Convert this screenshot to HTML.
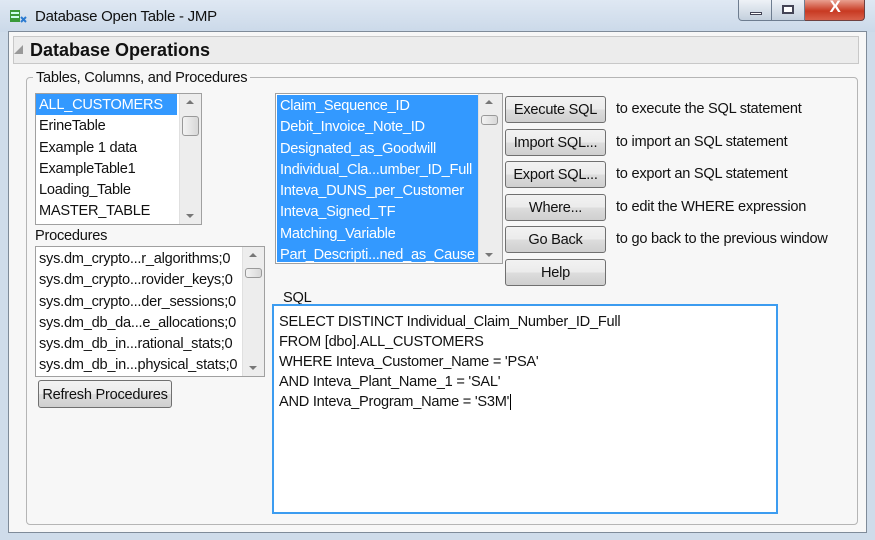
<!DOCTYPE html>
<html><head><style>
*{margin:0;padding:0;box-sizing:border-box}
body{width:875px;height:540px;overflow:hidden;background:#cfdcea;font-family:"Liberation Sans",sans-serif;font-size:14.6px;color:#111;position:relative;letter-spacing:-0.25px}
.a{position:absolute}
.title{left:0;top:0;width:875px;height:32px;background:linear-gradient(#dfe8f3,#cbd9e9)}
.client{left:8px;top:31px;width:859px;height:502px;background:#f7f7f7;border:1px solid #7f8b99}
.list{background:#fff;border:1px solid #a0a0a0;overflow:hidden}
.row{height:21.3px;line-height:23px;padding-left:3px;white-space:nowrap;overflow:hidden}
.sel{background:#3399ff;color:#fff}
.sb{position:absolute;top:0;right:0;width:22px;bottom:0;background:#ededed;border-left:1px solid #e0e0e0}
.thumb{position:absolute;left:2px;width:17px;background:linear-gradient(90deg,#f3f3f3,#d8d8d8);border:1px solid #999;border-radius:3px}
.up,.dn{position:absolute;left:6px;width:0;height:0;border-left:4px solid transparent;border-right:4px solid transparent}
.up{top:6px;border-bottom:4px solid #777}
.dn{bottom:6px;border-top:4px solid #777}
.btn{position:absolute;border:1px solid #707070;border-radius:3px;background:linear-gradient(#f2f2f2 0%,#ebebeb 50%,#dddddd 51%,#cfcfcf 100%);text-align:center;line-height:26px}
.desc{position:absolute;left:616px}
</style></head><body>
<div class="a title"></div>
<svg class="a" style="left:9px;top:8px" width="18" height="18" viewBox="0 0 18 18"><rect x="1" y="2" width="10" height="12" fill="#3a9a3a"/><rect x="2" y="4" width="8" height="2" fill="#cfe"/><rect x="2" y="8" width="8" height="2" fill="#cfe"/><path d="M12 9l5 5M17 9l-5 5" stroke="#2a7ad0" stroke-width="2"/></svg>
<div class="a" style="left:35px;top:8px;font-size:15px">Database Open Table - JMP</div>
<div class="a" style="left:738px;top:0;width:34px;height:21px;border:1px solid #6e7d90;border-top:none;border-radius:0 0 0 4px;background:linear-gradient(#eef2f7,#c4d0dd)"><div class="a" style="left:11px;top:12px;width:12px;height:3px;background:#fff;border:1px solid #445"></div></div>
<div class="a" style="left:772px;top:0;width:33px;height:21px;border:1px solid #6e7d90;border-top:none;border-left:none;background:linear-gradient(#eef2f7,#c4d0dd)"><div class="a" style="left:10px;top:5px;width:12px;height:9px;border:2px solid #445;background:#fff"></div></div>
<div class="a" style="left:805px;top:0;width:60px;height:21px;border:1px solid #6e4040;border-top:none;border-left:none;border-radius:0 0 4px 0;background:linear-gradient(#e8a090,#c83a22 55%,#d8604a)"><div class="a" style="left:0;width:60px;top:-3px;text-align:center;color:#fff;font-weight:bold;font-size:17px">X</div></div>
<div class="a client"></div>
<div class="a" style="left:13px;top:36px;width:846px;height:28px;background:#ececec;border:1px solid #c8c8c8"></div>
<div class="a" style="left:14px;top:45px;width:0;height:0;border-left:9px solid transparent;border-bottom:9px solid #999"></div>
<div class="a" style="left:30px;top:40px;font-size:18px;font-weight:bold;letter-spacing:0">Database Operations</div>
<div class="a" style="left:26px;top:77px;width:832px;height:448px;border:1px solid #b5b5b5;border-radius:4px"></div>
<div class="a" style="left:33px;top:69px;background:#f7f7f7;padding:0 3px;line-height:18px">Tables, Columns, and Procedures</div>

<div class="a list" style="left:35px;top:93px;width:167px;height:132px">
<div class="row sel" style="width:141px">ALL_CUSTOMERS</div>
<div class="row">ErineTable</div><div class="row">Example 1 data</div><div class="row">ExampleTable1</div><div class="row">Loading_Table</div><div class="row">MASTER_TABLE</div>
<div class="sb"><div class="up"></div><div class="thumb" style="top:22px;height:20px"></div><div class="dn"></div></div>
</div>
<div class="a" style="left:35px;top:228px">Procedures</div>
<div class="a list" style="left:35px;top:246px;width:230px;height:131px">
<div style="padding-top:1px">
<div class="row">sys.dm_crypto...r_algorithms;0</div><div class="row">sys.dm_crypto...rovider_keys;0</div><div class="row">sys.dm_crypto...der_sessions;0</div><div class="row">sys.dm_db_da...e_allocations;0</div><div class="row">sys.dm_db_in...rational_stats;0</div><div class="row">sys.dm_db_in...physical_stats;0</div></div>
<div class="sb"><div class="up"></div><div class="thumb" style="top:21px;height:10px"></div><div class="dn"></div></div>
</div>
<div class="btn" style="left:38px;top:380px;width:134px;height:28px;line-height:28px">Refresh Procedures</div>

<div class="a list" style="left:275px;top:93px;width:228px;height:171px">
<div class="sel" style="position:absolute;left:1px;top:1px;width:201px;height:167px">
<div class="row">Claim_Sequence_ID</div><div class="row">Debit_Invoice_Note_ID</div><div class="row">Designated_as_Goodwill</div><div class="row">Individual_Cla...umber_ID_Full</div><div class="row">Inteva_DUNS_per_Customer</div><div class="row">Inteva_Signed_TF</div><div class="row">Matching_Variable</div><div class="row">Part_Descripti...ned_as_Cause</div></div>
<div class="sb" style="width:24px"><div class="up"></div><div class="thumb" style="top:21px;height:10px"></div><div class="dn"></div></div>
</div>

<div class="btn" style="left:505px;top:96px;width:101px;height:27px">Execute SQL</div>
<div class="btn" style="left:505px;top:129px;width:101px;height:27px">Import SQL...</div>
<div class="btn" style="left:505px;top:161px;width:101px;height:27px">Export SQL...</div>
<div class="btn" style="left:505px;top:194px;width:101px;height:27px">Where...</div>
<div class="btn" style="left:505px;top:226px;width:101px;height:27px">Go Back</div>
<div class="btn" style="left:505px;top:259px;width:101px;height:27px">Help</div>
<div class="desc" style="top:101px">to execute the SQL statement</div>
<div class="desc" style="top:134px">to import an SQL statement</div>
<div class="desc" style="top:166px">to export an SQL statement</div>
<div class="desc" style="top:199px">to edit the WHERE expression</div>
<div class="desc" style="top:231px">to go back to the previous window</div>

<div class="a" style="left:283px;top:290px">SQL</div>
<div class="a" style="left:272px;top:304px;width:506px;height:210px;background:#fff;border:2px solid #3c9cf0;padding:6px 0 0 5px;line-height:20px">
SELECT DISTINCT Individual_Claim_Number_ID_Full<br>FROM [dbo].ALL_CUSTOMERS<br>WHERE Inteva_Customer_Name = 'PSA'<br>AND Inteva_Plant_Name_1 = 'SAL'<br>AND Inteva_Program_Name = 'S3M'<span style="border-left:1px solid #000;margin-left:1px"></span>
</div>
</body></html>
